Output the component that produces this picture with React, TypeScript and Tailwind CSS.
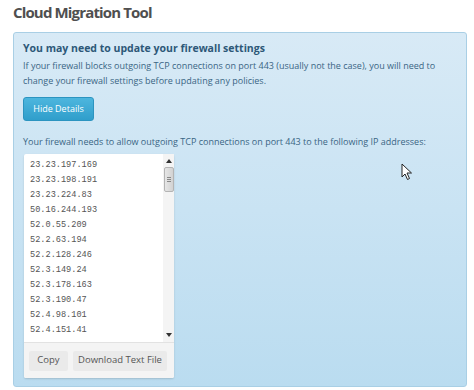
const ips = [
  '23.23.197.169',
  '23.23.198.191',
  '23.23.224.83',
  '50.16.244.193',
  '52.0.55.209',
  '52.2.63.194',
  '52.2.128.246',
  '52.3.149.24',
  '52.3.178.163',
  '52.3.190.47',
  '52.4.98.101',
  '52.4.151.41',
];

function Cursor() {
  return (
    <svg width="12" height="18" viewBox="0 0 12 18" className="absolute left-[401px] top-[163px]">
      <path d="M1 1 L1 14 L4 11 L6.5 16.5 L8.5 15.5 L6 10 L10.5 10 Z" fill="#fff" stroke="#222" strokeWidth="1" strokeLinejoin="round" />
    </svg>
  );
}

function Arrow({ up }: { up?: boolean }) {
  return (
    <svg width="6" height="4" viewBox="0 0 6 4">
      <polygon points={up ? '0,4 6,4 3,0' : '0,0 6,0 3,4'} fill="#333" />
    </svg>
  );
}

export default function App() {
  return (
    <div className="relative w-[474px] h-[390px] overflow-hidden bg-white font-['Open_Sans',sans-serif]">
      <h1 className="pl-[13px] pt-[1px] text-[15px] leading-[22px] font-bold tracking-[-0.85px] text-[#4f4f4f]">Cloud Migration Tool</h1>

      <div className="ml-[13px] mt-[9px] w-[454px] h-[355px] rounded-[3px] border border-[#a9cfe5] bg-gradient-to-b from-[#d8eaf6] to-[#badcf0] pl-[9px] pt-[6px]">
        <h2 className="text-[10.5px] leading-[18px] font-bold text-[#2d5878]">You may need to update your firewall settings</h2>
        <p className="mt-[1px] text-[9px] leading-[15px] text-[#3a6584]">
          If your firewall blocks outgoing TCP connections on port 443 (usually not the case), you will need to
          <br />
          change your firewall settings before updating any policies.
        </p>

        <button className="mt-[9px] h-[24px] w-[71px] rounded-[3px] border border-[#2c94c0] bg-gradient-to-b from-[#4db6de] to-[#2f9ecb] text-[9px] text-white">
          Hide Details
        </button>

        <p className="mt-[13px] text-[9px] leading-[15px] text-[#3a6584]">
          Your firewall needs to allow outgoing TCP connections on port 443 to the following IP addresses:
        </p>

        <div className="ml-[1px] mt-[5px] w-[150px] rounded-[2px] bg-white shadow-[0_1px_2px_rgba(0,0,0,0.15)]">
          <div className="flex h-[189px] border-b border-[#e2e2e2]">
            <div className="flex-1 overflow-hidden pl-[6px] pt-[3.5px] font-['Liberation_Mono',monospace] text-[8.6px] text-[#555]">
              {ips.map((ip) => (
                <div key={ip} className="h-[15px] leading-[15px]">{ip}</div>
              ))}
            </div>
            <div className="flex w-[11px] flex-col items-center bg-[#f4f4f4]">
              <div className="mt-[5px]"><Arrow up /></div>
              <div className="mt-[4px] flex h-[25px] w-[10px] flex-col items-center justify-center gap-[1px] rounded-[2px] border border-[#b4b4b4] bg-gradient-to-r from-[#e6e6e6] to-[#d2d2d2]">
                <span className="h-px w-[4px] bg-[#888]" />
                <span className="h-px w-[4px] bg-[#888]" />
                <span className="h-px w-[4px] bg-[#888]" />
              </div>
              <div className="flex-1" />
              <div className="mb-[5px]"><Arrow /></div>
            </div>
          </div>
          <div className="flex h-[35px] items-center gap-[5px] rounded-b-[2px] bg-[#f4f4f4] pl-[5px]">
            <button className="h-[20px] w-[39px] rounded-[2px] bg-[#eaeaea] text-[9.5px] text-[#555]">Copy</button>
            <button className="h-[20px] w-[94px] rounded-[2px] bg-[#eaeaea] text-[9.5px] text-[#555]">Download Text File</button>
          </div>
        </div>
      </div>

      <Cursor />
    </div>
  );
}
